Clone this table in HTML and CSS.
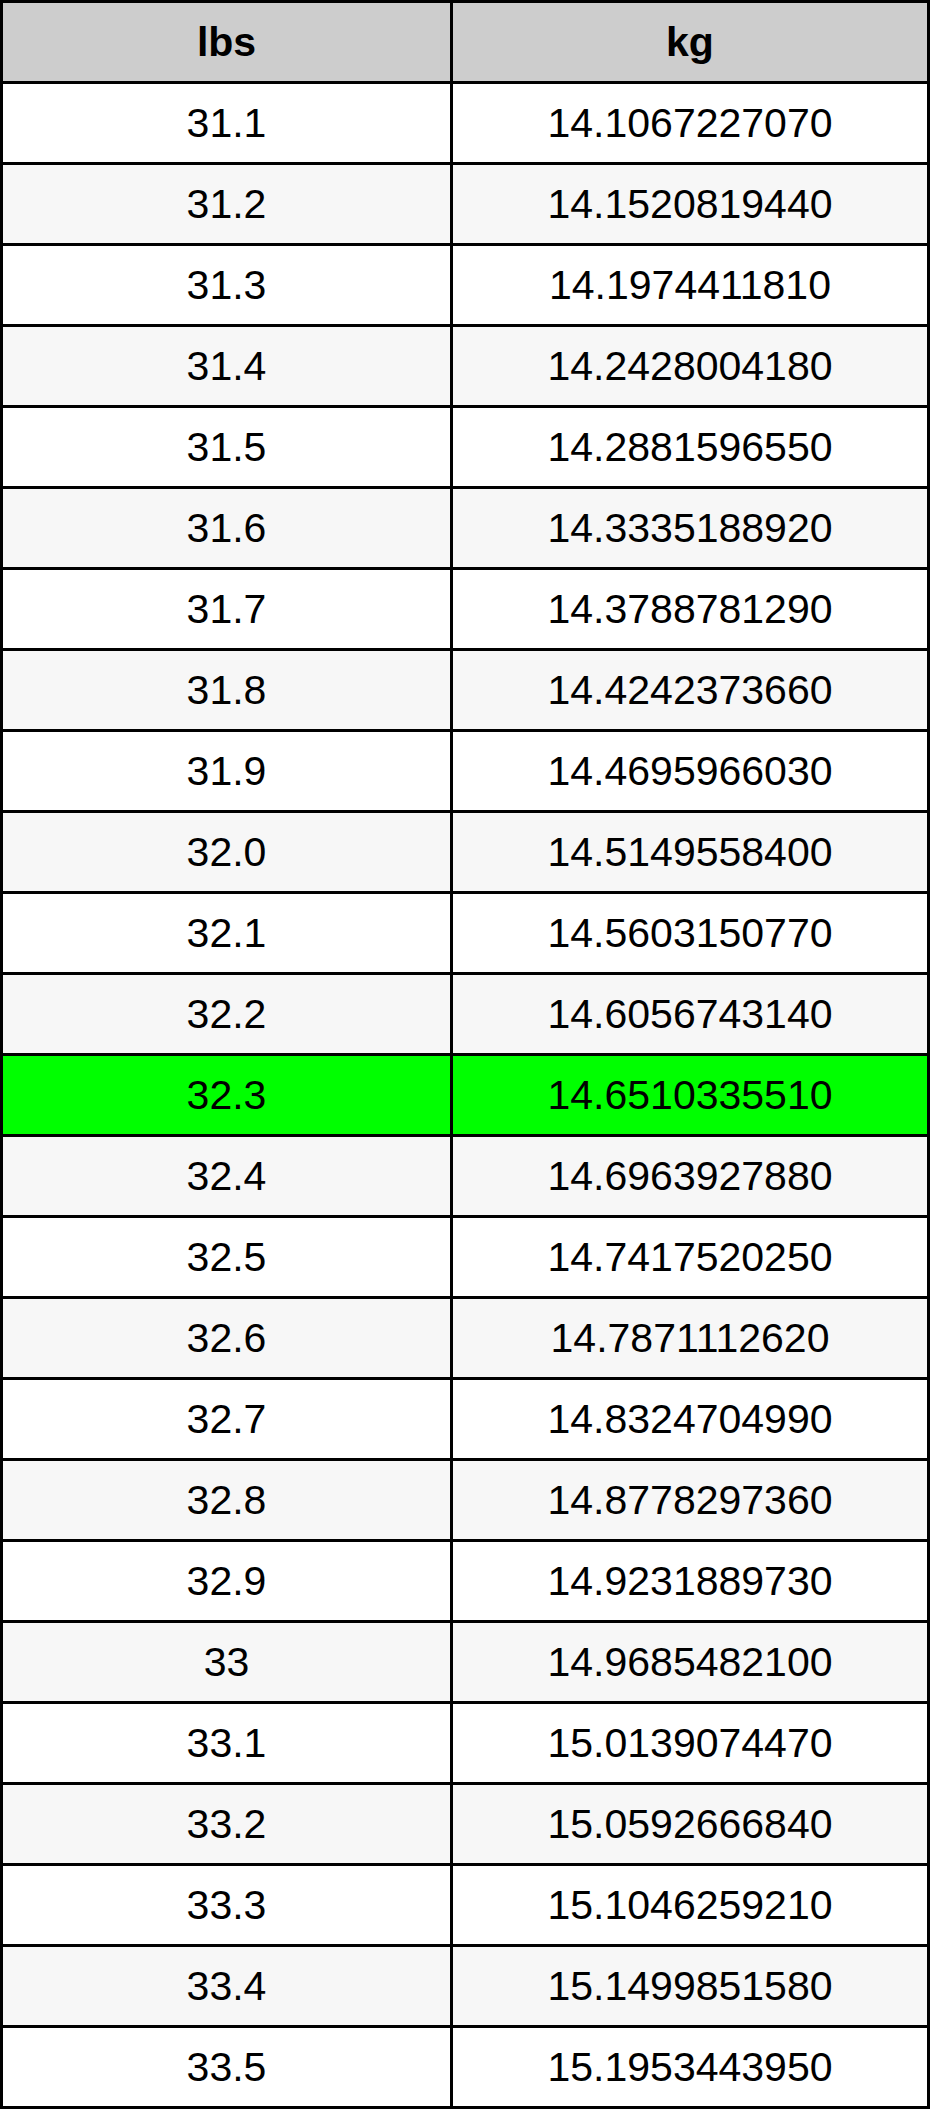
FILE: index.html
```html
<!DOCTYPE html>
<html>
<head>
<meta charset="utf-8">
<link rel="stylesheet" href="styles.css">
</head>
<body>
<table class="conv">
<thead>
<tr><th class="c1">lbs</th><th class="c2">kg</th></tr>
</thead>
<tbody>
<tr><td>31.1</td><td>14.1067227070</td></tr>
<tr><td>31.2</td><td>14.1520819440</td></tr>
<tr><td>31.3</td><td>14.1974411810</td></tr>
<tr><td>31.4</td><td>14.2428004180</td></tr>
<tr><td>31.5</td><td>14.2881596550</td></tr>
<tr><td>31.6</td><td>14.3335188920</td></tr>
<tr><td>31.7</td><td>14.3788781290</td></tr>
<tr><td>31.8</td><td>14.4242373660</td></tr>
<tr><td>31.9</td><td>14.4695966030</td></tr>
<tr><td>32.0</td><td>14.5149558400</td></tr>
<tr><td>32.1</td><td>14.5603150770</td></tr>
<tr><td>32.2</td><td>14.6056743140</td></tr>
<tr class="hl"><td>32.3</td><td>14.6510335510</td></tr>
<tr><td>32.4</td><td>14.6963927880</td></tr>
<tr><td>32.5</td><td>14.7417520250</td></tr>
<tr><td>32.6</td><td>14.7871112620</td></tr>
<tr><td>32.7</td><td>14.8324704990</td></tr>
<tr><td>32.8</td><td>14.8778297360</td></tr>
<tr><td>32.9</td><td>14.9231889730</td></tr>
<tr><td>33</td><td>14.9685482100</td></tr>
<tr><td>33.1</td><td>15.0139074470</td></tr>
<tr><td>33.2</td><td>15.0592666840</td></tr>
<tr><td>33.3</td><td>15.1046259210</td></tr>
<tr><td>33.4</td><td>15.1499851580</td></tr>
<tr><td>33.5</td><td>15.1953443950</td></tr>
</tbody>
</table>
</body>
</html>
```

FILE: styles.css
```css
html, body {
  margin: 0;
  padding: 0;
  background: #ffffff;
}

.conv {
  width: 930px;
  border-collapse: collapse;
  table-layout: fixed;
  border: 3px solid #000;
  font-family: "Liberation Sans", Arial, sans-serif;
  font-size: 41px;
  color: #000;
}

.conv th,
.conv td {
  border: 3px solid #000;
  text-align: center;
  vertical-align: middle;
  padding: 0;
}

.conv th {
  background: #cdcdcd;
  font-weight: bold;
  height: 78px;
}

.conv th.c1 {
  width: 447px;
}

.conv td {
  height: 78px;
}

.conv tbody tr:nth-child(odd) td {
  background: #ffffff;
}

.conv tbody tr:nth-child(even) td {
  background: #f7f7f7;
}

.conv tbody tr.hl td {
  background: #00ff00;
}
```
